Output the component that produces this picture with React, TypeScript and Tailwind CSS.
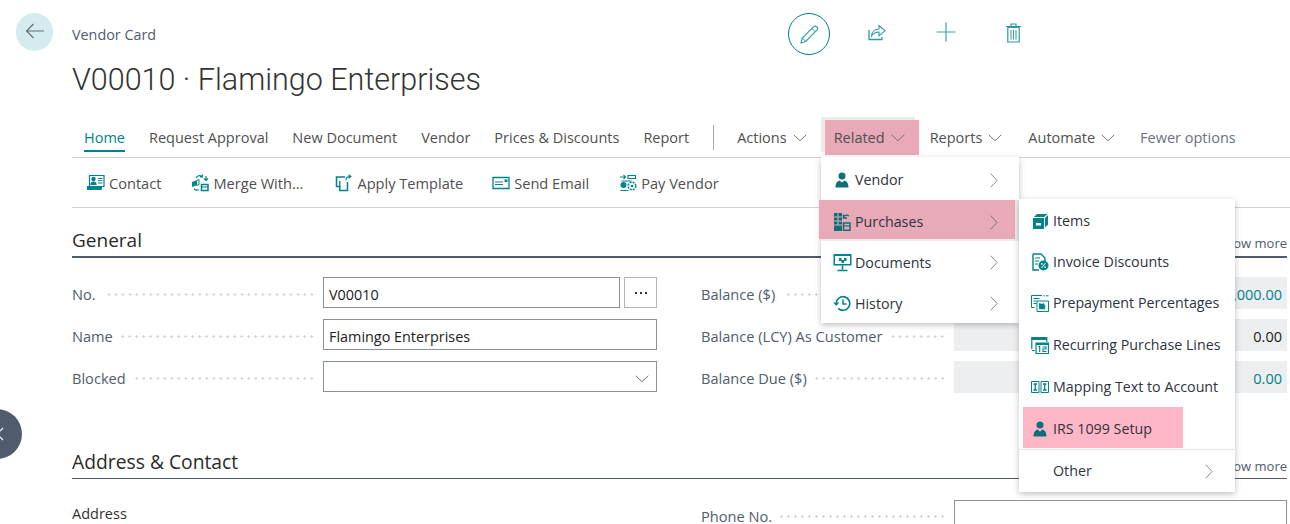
import React from "react";

const T = "#00838a";

function Svg({ w = 18, h = 18, vb = "0 0 18 18", children, className = "" }: { w?: number; h?: number; vb?: string; children: React.ReactNode; className?: string }) {
  return (
    <svg width={w} height={h} viewBox={vb} fill="none" className={"shrink-0 " + className}>
      {children}
    </svg>
  );
}

const ContactIcon = () => (
  <Svg>
    <path d="M2.500 1.500h14.500v11H2.500z" fill="#fff" stroke={T} strokeWidth="1.200" />
    <circle cx="6.500" cy="5" r="2.200" fill={T} />
    <path d="M3.300 11c0-2.500 1.500-3.500 3.200-3.500s3.200 1 3.200 3.500z" fill={T} />
    <path d="M11 4.500h4.500M11 6.700h4.500M11 9h4.500" stroke={T} />
    <path d="M0 12h15.500l-1 4H0z" fill={T} />
  </Svg>
);
const MergeIcon = () => (
  <Svg>
    <path d="M1 8l4-1.500v5L1 13z" fill={T} />
    <path d="M5.500 6.500l2.500-1v5l-2.500 1z" fill="none" stroke={T} />
    <path d="M10.500 10.500h6.500v6h-6.500z" stroke={T} strokeWidth="1.500" />
    <path d="M10.500 13h6.500" stroke={T} />
    <path d="M5 4c1-2.500 4-3 6-1.500M11.500 .5v2.500H9M13 4.500l2 2 2-2M15 7V2" stroke={T} strokeWidth="1.200" />
    <path d="M3 15c1 1 3 1.500 5 .8" stroke={T} strokeWidth="1.200" />
  </Svg>
);
const TemplateIcon = () => (
  <Svg>
    <path d="M10 3H1.500v9.500h3.300v4h7.700V8" stroke={T} strokeWidth="1.500" />
    <path d="M4.800 12.500V7" stroke={T} strokeWidth="1.300" />
    <path d="M11 6c0-2 1.500-3.500 4-3.500M13.500.8l2.300 1.700-2.300 1.800" stroke={T} strokeWidth="1.200" />
  </Svg>
);
const MailIcon = () => (
  <Svg>
    <path d="M1 3.500h16v11H1z" stroke={T} strokeWidth="1.300" fill="#fff" />
    <path d="M3 8h8M3 10.500h8" stroke={T} strokeWidth="1.200" />
    <path d="M12.500 5.500h3V8h-3z" fill={T} />
  </Svg>
);
const PayIcon = () => (
  <Svg>
    <path d="M1 3h5M4.500 1l2 2-2 2M9 1.500h7.500v3H9z" stroke={T} strokeWidth="1.200" />
    <circle cx="4.500" cy="11" r="3" fill={T} />
    <circle cx="13" cy="12" r="3.800" stroke={T} strokeWidth="1.500" strokeDasharray="2 1" />
    <path d="M2.500 7h10M1.500 16.500h8" stroke={T} strokeWidth="1.200" />
    <circle cx="13" cy="12" r="1.300" fill={T} />
  </Svg>
);
const PersonIcon = () => (
  <Svg w={14} h={16} vb="0 0 14 16">
    <circle cx="7" cy="4" r="3.500" fill="#0d6f78" />
    <path d="M.5 15.500c0-4.500 2-6.500 4-7L7 10.500l2.500-2c2 .5 4 2.500 4 7z" fill="#0d6f78" />
  </Svg>
);
const PurchasesIcon = () => (
  <Svg w={17} h={18} vb="0 0 17 18">
    <path d="M0 0h8v18H0z" fill="#0d6f78" />
    <path d="M0 4h8M0 8h8M0 12h8M4 0v12" stroke="#e8a9b8" strokeWidth="1" />
    <path d="M9 5c1-3 4-3.500 6-2M9.500 1.500v3.500H13" stroke="#0d6f78" strokeWidth="1.300" />
    <path d="M9.500 10h6.500v7.300H9.500z" stroke="#0d6f78" strokeWidth="1.500" />
    <path d="M9.500 13h6.500" stroke="#0d6f78" strokeWidth="1.200" />
  </Svg>
);
const DocumentsIcon = () => (
  <Svg w={19} h={19} vb="0 0 19 19">
    <path d="M.5 1h18v11.500H.5z" fill={T} />
    <path d="M2 3h15v8H2z" fill="#fff" />
    <path d="M6 5h2.500v2H11V5h2.500v3H11v2H8.500V8H6z" fill={T} />
    <path d="M9.500 12.500v4M4.500 17.500h10" stroke={T} strokeWidth="1.600" />
  </Svg>
);
const HistoryIcon = () => (
  <Svg w={19} h={17} vb="0 0 19 17">
    <path d="M3.200 8.500a6.800 6.800 0 1 1 2 4.800" stroke={T} strokeWidth="1.700" />
    <path d="M.3 7.500h6L3.300 11z" fill={T} />
    <path d="M10 4.500V9h3.500" stroke={T} strokeWidth="1.500" />
  </Svg>
);
const ItemsIcon = () => (
  <Svg w={15} h={15} vb="0 0 15 15">
    <path d="M0 4h11v11H0z" fill={T} />
    <path d="M1 3l3-3h10.500L11 3z" fill={T} />
    <path d="M12 4l3-3v9.500l-3 3z" fill={T} />
    <path d="M3 9h5v2.500H3z" fill="#fff" />
  </Svg>
);
const InvoiceIcon = () => (
  <Svg w={17} h={18} vb="0 0 17 18">
    <path d="M1 1h8l4 4v3" stroke={T} strokeWidth="1.400" />
    <path d="M1 1v16h6" stroke={T} strokeWidth="1.400" />
    <path d="M3 5h5M3 8h4M3 11h3" stroke={T} />
    <circle cx="11.500" cy="12.500" r="5" fill={T} />
    <path d="M9.500 15l4-5" stroke="#fff" />
    <circle cx="9.800" cy="10.800" r=".9" fill="#fff" />
    <circle cx="13.200" cy="14.200" r=".9" fill="#fff" />
  </Svg>
);
const PrepayIcon = () => (
  <Svg w={18} h={17} vb="0 0 18 17">
    <path d="M11 .5H.5v12h3" stroke={T} />
    <path d="M12.500.8h1.500M15 .8h2.500" stroke={T} />
    <path d="M2.500 3.500h6M2.500 6h3M2.500 8.500h3" stroke={T} />
    <path d="M6 6h11.500v10.500H6z" fill="#fff" stroke={T} />
    <path d="M8 8l3 1 1.500-1 2 3-1 3.500-5.500-.5z" fill={T} />
  </Svg>
);
const RecurringIcon = () => (
  <Svg w={18} h={18} vb="0 0 18 18">
    <path d="M.8 13V1.500h15V6" stroke={T} strokeWidth="1.200" />
    <path d="M.8 1.500h15v2.500H.8z" fill={T} />
    <path d="M.8 14.500h3" stroke={T} />
    <path d="M5 7h12.500v10.500H5z" fill="#fff" stroke={T} strokeWidth="1.200" />
    <path d="M5 7h12.500v2H5z" fill={T} />
    <path d="M7.500 11l1.200-.800V16M11.500 11h3.500v2h-3v2.500h3.500" stroke={T} strokeWidth="1.100" />
  </Svg>
);
const MappingIcon = () => (
  <Svg w={18} h={12} vb="0 0 18 12">
    <path d="M.5.500h7.500v11H.5zM10 .500h7.500v11H10z" stroke={T} />
    <path d="M2.500 3h3.500M2.500 9h3.500M4.200 3v6M12 3h3.500M12 9h3.500M13.700 3v6" stroke={T} strokeWidth="1.300" />
  </Svg>
);
const Chevron = ({ c = "#777" }: { c?: string }) => (
  <svg width="14" height="8" viewBox="0 0 14 8" fill="none" className="shrink-0">
    <path d="M.7.800l6.300 5.900L13.300.8" stroke={c} />
  </svg>
);
const ChevRight = ({ c = "#8a8f96" }: { c?: string }) => (
  <svg width="8" height="15" viewBox="0 0 8 15" fill="none" className="shrink-0">
    <path d="M.7.700l6.400 6.800L.7 14.300" stroke={c} />
  </svg>
);

function Tool({ icon, label, className = "" }: { icon: React.ReactNode; label: string; className?: string }) {
  return (
    <div className={"flex items-center gap-[4px] " + className}>
      {icon}
      <span>{label}</span>
    </div>
  );
}

const dots =
  "flex-1 h-[3px] mx-[8px] bg-[radial-gradient(circle,#d0d3d7_1px,transparent_1.200px)] bg-[length:7px_3px] bg-repeat-x bg-right";

function Field({ label, children }: { label: string; children: React.ReactNode }) {
  return (
    <div className="flex items-center h-[31px]">
      <div className="w-[251px] flex items-center text-[#505c6d] text-[14.600px] pt-[4px]">
        <span className="whitespace-nowrap">{label}</span>
        <span className={dots} />
      </div>
      {children}
    </div>
  );
}

const box = "h-[31px] border border-[#8a919e] flex items-center px-[5px] pt-[4px] text-[#212121] bg-white text-[14.400px]";

function NumField({ label, value, teal }: { label: string; value: string; teal?: boolean }) {
  return (
    <div className="flex items-center h-[32px]">
      <div className="w-[253px] flex items-center text-[#505c6d] text-[14.600px] pt-[4px]">
        <span className="whitespace-nowrap">{label}</span>
        <span className={dots} />
      </div>
      <div className={"flex-1 h-[32px] bg-[#eceef0] flex items-center justify-end pr-[5px] pt-[3px] " + (teal ? "text-[#00838a]" : "text-[#212121]")}>
        {value}
      </div>
    </div>
  );
}

function Row({ icon, label, arrow, active, h }: { icon?: React.ReactNode; label: string; arrow?: boolean; active?: boolean; h: string }) {
  return (
    <div className={"relative flex items-center " + h}>
      {active && <div className="absolute left-0 right-0 top-[-1px] bottom-[2px] bg-[#ebebeb]" />}
      {active && <div className="absolute left-[-2px] right-[4px] top-[-1px] bottom-[4px] bg-[#e8a9b8]" />}
      <div className="relative w-[34px] pl-[8px] flex justify-center shrink-0">{icon}</div>
      <span className="relative flex-1 text-[#2e3340] whitespace-nowrap">{label}</span>
      {arrow && <div className="relative mr-[21px]"><ChevRight c={active ? "#777" : "#8d8a7a"} /></div>}
    </div>
  );
}

function SubRow({ icon, label, arrow, hi, h }: { icon?: React.ReactNode; label: string; arrow?: boolean; hi?: boolean; h: string }) {
  return (
    <div className={"relative flex items-center " + h}>
      {hi && <div className="absolute left-[4px] top-[-1px] bottom-[2px] w-[160px] bg-[#ffb6c6]" />}
      <div className="relative w-[34px] pl-[8px] flex justify-center shrink-0">{icon}</div>
      <span className="relative flex-1 text-[#2e3340] whitespace-nowrap">{label}</span>
      {arrow && <div className="relative mr-[22px]"><ChevRight /></div>}
    </div>
  );
}

export default function App() {
  return (
    <div className="relative w-[1290px] h-[524px] overflow-hidden bg-white font-['Open_Sans',sans-serif] text-[14.500px] text-[#505050]">
      <div className="flex">
        <div className="w-[72px] shrink-0 pl-[16px] pt-[13px]">
          <div className="w-[37px] h-[38px] rounded-full bg-[#d5ecef] flex items-center justify-center">
            <svg width="20" height="16" viewBox="0 0 20 16" fill="none" className="mt-[-3px]">
              <path d="M19 8H1.500M8.500 1L1.500 8l7 7" stroke="#5e6e73" strokeWidth="1.100" />
            </svg>
          </div>
        </div>
        <div className="flex-1 min-w-0">
          {/* header */}
          <div className="h-[120px] flex">
            <div className="w-[716px] shrink-0">
              <div className="pt-[25px] h-[44px] text-[#505c6d] leading-[20px] text-[14.350px]">Vendor Card</div>
              <div className="font-['Roboto',sans-serif] text-[30.500px] font-light text-[#333] leading-[40px] pt-[16px] whitespace-nowrap">V00010 · Flamingo Enterprises</div>
            </div>
            <div className="flex pt-[13px] items-start">
              <div className="w-[42px] h-[42px] rounded-full border border-[#00838a] flex items-center justify-center">
                <svg width="19" height="19" viewBox="0 0 19 19" fill="none">
                  <path d="M1 18l1.200-5L13.500 1.800c1-1 2.500-.9 3.400 0s1 2.400 0 3.400L5.700 16.500z" stroke="#2f9aa0" strokeWidth="1.100" />
                  <path d="M12 3.500l3.500 3.500M2.300 13l3.300 3.300" stroke="#2f9aa0" />
                </svg>
              </div>
              <div className="ml-[38px] mt-[10px]">
                <svg width="18" height="18" viewBox="0 0 18 18" fill="none">
                  <path d="M1 7v9.500h13V14" stroke="#2f9aa0" strokeWidth="1.300" />
                  <path d="M3.500 13c.3-4.500 3.500-7 7.500-7V2.500l6 5.300-6 5V9c-3 0-5.500 1-7.500 4z" stroke="#2f9aa0" strokeWidth="1.100" />
                </svg>
              </div>
              <div className="ml-[50px] mt-[9px]">
                <svg width="20" height="20" viewBox="0 0 20 20" fill="none">
                  <path d="M10 .5v19M.5 10h19" stroke="#3fa3a8" strokeWidth="1.200" />
                </svg>
              </div>
              <div className="ml-[50px] mt-[10px]">
                <svg width="15" height="20" viewBox="0 0 15 20" fill="none">
                  <path d="M1.800 4.500h11.400v14.500H1.800zM0 3.500h15M5 3.300V1h5v2.300" stroke="#2f9aa0" strokeWidth="1.200" />
                  <path d="M5 7v9.500M7.500 7v9.500M10 7v9.500" stroke="#2f9aa0" />
                </svg>
              </div>
            </div>
          </div>
          {/* tabs */}
          <div className="h-[38px] pb-[2px] flex items-center border-b border-[#d0d0d0] pl-[12px] whitespace-nowrap text-[#505050]">
            <div className="relative text-[#00838a]">
              Home
              <div className="absolute left-0 right-0 bottom-[-4px] h-[2px] bg-[#00838a]" />
            </div>
            <div className="flex items-center gap-[24px] ml-[24px]">
              <span>Request Approval</span>
              <span>New Document</span>
              <span>Vendor</span>
              <span>Prices &amp; Discounts</span>
              <span>Report</span>
            </div>
            <div className="w-px h-[25px] bg-[#a8a8a8] ml-[24px] mr-[23px]" />
            <div className="flex items-center gap-[6px]">
              <span>Actions</span>
              <Chevron />
            </div>
            <div className="relative ml-[18px] w-[94px] h-[35px] flex items-center gap-[6px] pl-[9px] bg-[#e8a9b8] shadow-[-4px_-3px_0_#ebebeb]">
              <span>Related</span>
              <Chevron />
            </div>
            <div className="flex items-center gap-[6px] ml-[11px]">
              <span>Reports</span>
              <Chevron />
            </div>
            <div className="flex items-center gap-[6px] ml-[26px]">
              <span>Automate</span>
              <Chevron />
            </div>
            <span className="ml-[25px] text-[#6b7280]">Fewer options</span>
          </div>
          {/* toolbar */}
          <div className="h-[50px] pt-[2px] flex items-center border-b border-[#d0d0d0] pl-[15px] gap-[30px] whitespace-nowrap text-[14.600px]">
            <Tool icon={<ContactIcon />} label="Contact" />
            <Tool icon={<MergeIcon />} label="Merge With..." />
            <Tool icon={<TemplateIcon />} label="Apply Template" className="ml-[2px]" />
            <Tool icon={<MailIcon />} label="Send Email" className="ml-[-1px]" />
            <Tool icon={<PayIcon />} label="Pay Vendor" />
          </div>
          {/* general */}
          <div className="pr-[3px]">
            <div className="h-[50px] flex items-end justify-between border-b-2 border-[#505c6d] pb-[4px]">
              <span className="text-[19px] font-medium text-[#2a2a2a] leading-[24px]">General</span>
              <span className="text-[13px] text-[#505c6d] mb-[-1px]">Show more</span>
            </div>
            <div className="grid grid-cols-[585px_586px] gap-x-[44px] mt-[19px]">
              <div className="flex flex-col gap-[11px]">
                <Field label="No.">
                  <div className={box + " w-[297px]"}>V00010</div>
                  <div className="w-[33px] h-[31px] ml-[4px] border border-[#b0b4bb] flex items-center justify-center gap-[3px]">
                    <span className="w-[2px] h-[2px] bg-[#333]" />
                    <span className="w-[2px] h-[2px] bg-[#333]" />
                    <span className="w-[2px] h-[2px] bg-[#333]" />
                  </div>
                </Field>
                <Field label="Name">
                  <div className={box + " w-[334px]"}>Flamingo Enterprises</div>
                </Field>
                <Field label="Blocked">
                  <div className={box + " w-[334px] justify-end pr-[7px] pt-0"}>
                    <Chevron />
                  </div>
                </Field>
              </div>
              <div className="flex flex-col gap-[10px]">
                <NumField label="Balance ($)" value="1,000.00" teal />
                <NumField label="Balance (LCY) As Customer" value="0.00" />
                <NumField label="Balance Due ($)" value="0.00" teal />
              </div>
            </div>
            {/* address */}
            <div className="h-[50px] mt-[36px] flex items-end justify-between border-b border-[#505c6d] pb-[4px]">
              <span className="text-[19.300px] font-medium text-[#2a2a2a] leading-[24px]">Address &amp; Contact</span>
              <span className="text-[13px] text-[#505c6d] mb-[-2px]">Show more</span>
            </div>
            <div className="grid grid-cols-[585px_586px] gap-x-[44px] mt-[21px]">
              <div className="font-medium text-[#333] leading-[14px] pt-[7px] h-[24px]">Address</div>
              <div className="flex items-start h-[24px]">
                <div className="w-[253px] flex items-center text-[#505c6d] text-[14.600px] leading-[14px] pt-[9px]">
                  <span className="whitespace-nowrap">Phone No.</span>
                  <span className={dots} />
                </div>
                <div className="flex-1 h-[32px] border border-[#8a919e]" />
              </div>
            </div>
          </div>
        </div>
      </div>

      {/* side handle */}
      <div className="absolute left-[-28px] top-[409px] w-[50px] h-[50px] rounded-full bg-[#505c6d] flex items-center justify-end pr-[18px]">
        <svg width="8" height="14" viewBox="0 0 8 14" fill="none">
          <path d="M7 1L1 7l6 6" stroke="#fff" strokeWidth="1.200" />
        </svg>
      </div>

      {/* related menu */}
      <div className="absolute left-[821px] top-[157px] w-[198px] h-[166px] pt-[2px] bg-white shadow-[0_2px_6px_rgba(0,0,0,0.25)] text-[14.250px]">
        <Row h="h-[42px]" icon={<PersonIcon />} label="Vendor" arrow />
        <Row h="h-[42px]" icon={<PurchasesIcon />} label="Purchases" arrow active />
        <Row h="h-[39px]" icon={<DocumentsIcon />} label="Documents" arrow />
        <Row h="h-[43px]" icon={<HistoryIcon />} label="History" arrow />
      </div>

      {/* purchases submenu */}
      <div className="absolute left-[1019px] top-[199px] w-[216px] h-[293px] pt-[1px] bg-white shadow-[0_2px_6px_rgba(0,0,0,0.25)] text-[14.250px]">
        <SubRow h="h-[42px]" icon={<ItemsIcon />} label="Items" />
        <SubRow h="h-[40px]" icon={<InvoiceIcon />} label="Invoice Discounts" />
        <SubRow h="h-[42px]" icon={<PrepayIcon />} label="Prepayment Percentages" />
        <SubRow h="h-[42px]" icon={<RecurringIcon />} label="Recurring Purchase Lines" />
        <SubRow h="h-[42px]" icon={<MappingIcon />} label="Mapping Text to Account" />
        <SubRow h="h-[42px]" icon={<PersonIcon />} label="IRS 1099 Setup" hi />
        <div className="border-t border-[#e6e6e6] mt-[-1px]">
          <SubRow h="h-[42px]" label="Other" arrow />
        </div>
      </div>
    </div>
  );
}
